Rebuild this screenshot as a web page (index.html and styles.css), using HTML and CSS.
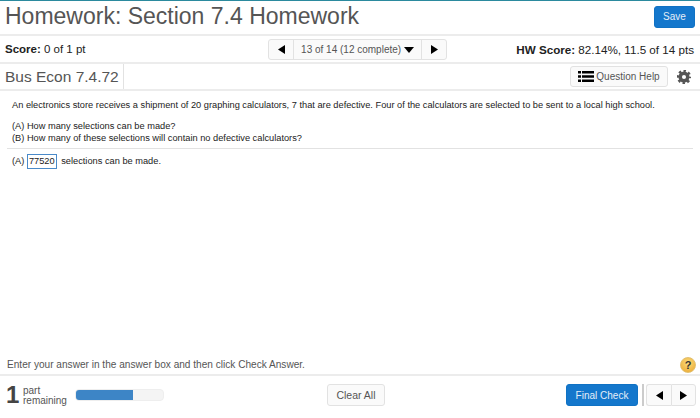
FILE: index.html
```html
<!DOCTYPE html>
<html lang="en">
<head>
    <meta charset="UTF-8">
    <title>Homework: Section 7.4 Homework</title>
    <link rel="stylesheet" href="styles.css">
</head>
<body>
    <div class="page">
        <div class="title-bar">
            <h1>Homework: Section 7.4 Homework</h1>
            <button class="btn btn-blue save-btn">Save</button>
        </div>
        <div class="score-bar">
            <div class="score"><b>Score:</b> 0 of 1 pt</div>
            <div class="pager">
                <button class="pager-arrow"><svg width="7" height="9" viewBox="0 0 7 9"><path d="M7 0v9L0 4.500z"/></svg></button>
                <button class="pager-mid">13 of 14 (12 complete) <svg width="10" height="6" viewBox="0 0 10 6"><path d="M0 0h10L5 6z"/></svg></button>
                <button class="pager-arrow"><svg width="7" height="9" viewBox="0 0 7 9"><path d="M0 0v9l7-4.500z"/></svg></button>
            </div>
            <div class="hw-score"><b>HW Score:</b> 82.14%, 11.5 of 14 pts</div>
        </div>
        <div class="question-bar">
            <div class="question-id">Bus Econ 7.4.72</div>
            <button class="help-btn">
                <svg width="16" height="11" viewBox="0 0 16 11"><path d="M0 0h3v2.500H0zM4 0h12v2.500H4zM0 4.200h3v2.500H0zM4 4.200h12v2.500H4zM0 8.500h3V11H0zM4 8.500h12V11H4z"/></svg>
                Question Help
            </button>
            <svg class="gear" width="14" height="14" viewBox="0 0 24 24">
                <circle cx="12" cy="12" r="6.500" class="gear-ring"/>
                <circle cx="12" cy="12" r="10" class="gear-teeth"/>
            </svg>
        </div>
        <div class="question">
            <p>An electronics store receives a shipment of 20 graphing calculators, 7 that are defective. Four of the calculators are selected to be sent to a local high school.</p>
            <p class="parts">(A) How many selections can be made?<br>(B) How many of these selections will contain no defective calculators?</p>
        </div>
        <div class="answer">(A) <span class="answer-box">77520</span> selections can be made.</div>
        <div class="hint-bar">
            <span>Enter your answer in the answer box and then click Check Answer.</span>
            <span class="hint-icon">?</span>
        </div>
        <div class="footer">
            <div class="remaining">
                <span class="remaining-num">1</span>
                <span class="remaining-text">part<br>remaining</span>
                <div class="progress"><div class="progress-fill" style="width: 66%"></div></div>
            </div>
            <button class="clear-btn">Clear All</button>
            <div class="footer-right">
                <button class="btn btn-blue final-btn">Final Check</button>
                <div class="footer-nav">
                    <button class="nav-arrow"><svg width="7" height="9" viewBox="0 0 7 9"><path d="M7 0v9L0 4.500z"/></svg></button>
                    <button class="nav-arrow"><svg width="7" height="9" viewBox="0 0 7 9"><path d="M0 0v9l7-4.500z"/></svg></button>
                </div>
            </div>
        </div>
    </div>
</body>
</html>
```

FILE: styles.css
```css
* {
    box-sizing: border-box;
}
body {
    margin: 0;
    background: #fff;
    font-family: 'Liberation Sans', Arial, sans-serif;
    color: #222;
}
button {
    font-family: inherit;
    cursor: pointer;
}
.page {
    width: 700px;
    height: 418px;
    display: flex;
    flex-direction: column;
    overflow: hidden;
    border-top: 1px solid #2b8a9e;
}
.title-bar {
    height: 35px;
    display: flex;
    align-items: center;
    justify-content: space-between;
    padding: 0 5px 2px 5px;
    border-bottom: 2px solid #ececec;
    flex-shrink: 0;
}
h1 {
    margin: 0;
    font-size: 23px;
    font-weight: normal;
    color: #555;
}
.btn {
    border: 1px solid #1072c4;
    border-radius: 3px;
    background: #1477cc;
    color: #e4eef8;
}
.save-btn {
    width: 41px;
    height: 22px;
    padding: 0;
    font-size: 10px;
}
.score-bar {
    height: 28px;
    display: flex;
    align-items: center;
    padding: 0 6px 0 5px;
    border-bottom: 2px solid #ececec;
    flex-shrink: 0;
    font-size: 11.500px;
}
.score {
    width: 263px;
}
.pager {
    display: flex;
    height: 21px;
    border: 1px solid #e2e2e2;
    border-radius: 3px;
    background: #fafafa;
}
.pager button {
    border: 0;
    background: none;
    padding: 0;
    color: #555;
}
.pager-arrow {
    width: 24px;
    display: flex;
    align-items: center;
    justify-content: center;
}
.pager-mid {
    width: 129px;
    font-size: 10px;
    border-left: 1px solid #e2e2e2 !important;
    border-right: 1px solid #e2e2e2 !important;
}
.hw-score {
    margin-left: auto;
    font-size: 11.650px;
}
.question-bar {
    height: 27px;
    display: flex;
    align-items: center;
    padding: 0 9px 0 5px;
    border-bottom: 2px solid #ececec;
    flex-shrink: 0;
}
.question-id {
    height: 100%;
    width: 119px;
    display: flex;
    align-items: center;
    font-size: 15.500px;
    color: #555;
    border-right: 1px solid #e2e2e2;
}
.help-btn {
    margin-left: auto;
    width: 98px;
    height: 21px;
    padding: 0;
    display: flex;
    align-items: center;
    justify-content: center;
    gap: 2px;
    border: 1px solid #e2e2e2;
    border-radius: 3px;
    background: #fafafa;
    color: #555;
    font-size: 10px;
}
.gear {
    margin-left: 9px;
}
.gear-ring {
    fill: none;
    stroke: #555;
    stroke-width: 6;
}
.gear-teeth {
    fill: none;
    stroke: #555;
    stroke-width: 5;
    stroke-dasharray: 4 3.850;
    stroke-dashoffset: 2;
}
.question {
    padding: 8px 12px 0;
    font-size: 9.250px;
    line-height: 12px;
}
.question p {
    margin: 0;
}
.question .parts {
    margin-top: 9px;
}
.answer {
    margin: 4px 7px 0;
    padding: 5px 5px 0;
    border-top: 1px solid #e2e2e2;
    font-size: 9.250px;
    flex-grow: 1;
}
.answer-box {
    display: inline-block;
    height: 15px;
    line-height: 13px;
    padding: 0 1px;
    margin-right: 2px;
    border: 1px solid #4a8ac9;
}
.hint-bar {
    height: 30px;
    display: flex;
    align-items: center;
    justify-content: space-between;
    padding: 9px 4px 0 7px;
    border-bottom: 2px solid #ececec;
    font-size: 10.100px;
    color: #555;
    flex-shrink: 0;
}
.hint-icon {
    width: 16px;
    height: 16px;
    border-radius: 50%;
    background: radial-gradient(circle at 50% 35%, #fbdc7c, #eaa52c);
    border: 1px solid #e2c070;
    color: #333;
    font-size: 11px;
    font-weight: bold;
    text-align: center;
    line-height: 14px;
}
.footer {
    height: 42px;
    display: flex;
    align-items: center;
    padding: 0 4px 4px 6px;
    flex-shrink: 0;
}
.remaining {
    display: flex;
    align-items: center;
    width: 321px;
}
.remaining-num {
    font-size: 24px;
    font-weight: bold;
    color: #444;
    width: 16px;
}
.remaining-text {
    font-size: 10px;
    line-height: 10px;
    color: #555;
    width: 53px;
    padding: 2px 0 0 1px;
}
.progress {
    width: 89px;
    height: 12px;
    border: 1px solid #eee;
    border-radius: 4px;
    background: #f4f4f4;
    overflow: hidden;
}
.progress-fill {
    height: 100%;
    background: #3d85c6;
}
.clear-btn {
    width: 58px;
    height: 22px;
    padding: 0;
    border: 1px solid #e2e2e2;
    border-radius: 3px;
    background: #fafafa;
    color: #555;
    font-size: 10.500px;
}
.footer-right {
    margin-left: auto;
    display: flex;
    align-items: center;
}
.final-btn {
    width: 72px;
    height: 22px;
    padding: 0;
    font-size: 10px;
}
.footer-nav {
    display: flex;
    height: 22px;
    margin-left: 4px;
    padding-left: 2px;
    border-left: 2px solid #ccc;
}
.nav-arrow {
    width: 25px;
    padding: 0;
    display: flex;
    align-items: center;
    justify-content: center;
    background: #fafafa;
    border: 1px solid #e2e2e2;
}
.nav-arrow:first-child {
    border-right: 0;
    border-radius: 3px 0 0 3px;
}
.nav-arrow:last-child {
    border-radius: 0 3px 3px 0;
}
```
